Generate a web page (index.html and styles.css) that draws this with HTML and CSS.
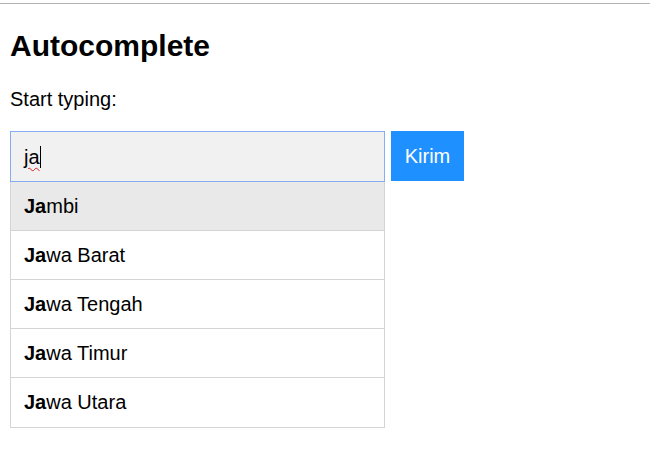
FILE: index.html
```html
<!DOCTYPE html>
<html>
<head>
<meta charset="utf-8">
<link rel="stylesheet" href="styles.css">
</head>
<body>
<div class="topline"></div>
<main class="page">
  <h2 class="title">Autocomplete</h2>
  <p class="lead">Start typing:</p>
  <form class="form">
    <div class="autocomplete">
      <div class="field"><span class="typed">ja</span><span class="caret"></span></div>
      <div class="items">
        <div class="item active"><strong>Ja</strong>mbi</div>
        <div class="item"><strong>Ja</strong>wa Barat</div>
        <div class="item"><strong>Ja</strong>wa Tengah</div>
        <div class="item"><strong>Ja</strong>wa Timur</div>
        <div class="item last"><strong>Ja</strong>wa Utara</div>
      </div>
    </div>
    <div class="submit">Kirim</div>
  </form>
</main>
</body>
</html>
```
FILE: styles.css
```css
html, body {
  margin: 0;
  padding: 0;
  background: #fff;
}
body {
  font-family: "Liberation Sans", Arial, sans-serif;
  color: #000;
  font-size: 20px;
}
.topline {
  height: 3px;
  border-bottom: 1px solid #b4b4b4;
}
.page {
  padding: 0 10px;
}
.title {
  font-size: 30px;
  font-weight: bold;
  line-height: 34px;
  margin: 25px 0 0;
}
.lead {
  margin: 25px 0 20px;
  line-height: 23px;
}
.form {
  display: flex;
  align-items: flex-start;
  gap: 6px;
}
.autocomplete {
  width: 375px;
}
.field {
  display: flex;
  align-items: center;
  height: 49px;
  padding: 0 13px;
  background: #f1f1f1;
  border: 1px solid #86acf2;
}
.typed {
  line-height: 24px;
  text-decoration: underline wavy #e02020;
  text-decoration-thickness: 1px;
  text-underline-offset: 3px;
}
.caret {
  display: inline-block;
  width: 1px;
  height: 22px;
  background: #000;
}
.items {
  border-left: 1px solid #d4d4d4;
  border-right: 1px solid #d4d4d4;
}
.item {
  padding: 12px 13px;
  line-height: 24px;
  border-bottom: 1px solid #d4d4d4;
  background: #fff;
}
.item.last {
  padding-bottom: 13px;
}
.item.active {
  background: #e9e9e9;
}
.submit {
  width: 73px;
  height: 50px;
  line-height: 50px;
  text-align: center;
  background: #1e90ff;
  color: #fff;
}
```
